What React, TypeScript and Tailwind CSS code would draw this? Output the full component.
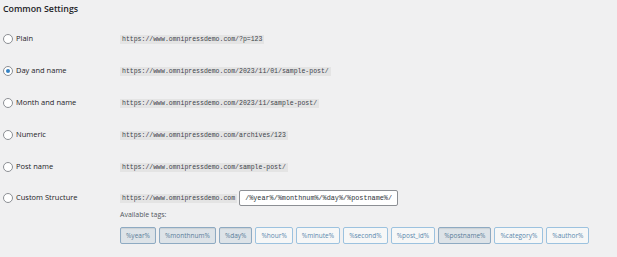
import React from "react";

const rows = [
  { label: "Plain", url: "https://www.omnipressdemo.com/?p=123" },
  { label: "Day and name", url: "https://www.omnipressdemo.com/2023/11/01/sample-post/", checked: true },
  { label: "Month and name", url: "https://www.omnipressdemo.com/2023/11/sample-post/" },
  { label: "Numeric", url: "https://www.omnipressdemo.com/archives/123" },
  { label: "Post name", url: "https://www.omnipressdemo.com/sample-post/" },
];

const tags = [
  { name: "%year%", active: true },
  { name: "%monthnum%", active: true },
  { name: "%day%", active: true },
  { name: "%hour%" },
  { name: "%minute%" },
  { name: "%second%" },
  { name: "%post_id%" },
  { name: "%postname%", active: true },
  { name: "%category%" },
  { name: "%author%" },
];

const Radio = ({ checked }: { checked?: boolean }) => (
  <span className="flex h-[10px] w-[10px] shrink-0 items-center justify-center rounded-full border border-[#8c8f94] bg-white">
    {checked && <span className="h-[4px] w-[4px] rounded-full bg-[#3582c4]" />}
  </span>
);

const Code = ({ children }: { children: React.ReactNode }) => (
  <code className="shrink-0 bg-[#e4e4e4] px-[2px] font-['Liberation_Mono',monospace] text-[6.5px] leading-[9px] text-[#3c434a]">
    {children}
  </code>
);

export default function App() {
  return (
    <div className="h-[257px] w-[617px] overflow-hidden bg-[#f0f0f1] pl-[3px] font-['Open_Sans',sans-serif] text-[#1d2327]">
      <div className="h-[23px] pt-[2px]">
        <h2 className="text-[8.8px] font-semibold leading-[14px]">Common Settings</h2>
      </div>

      {rows.map((r) => (
        <div key={r.label} className="flex h-[32px] items-center">
          <label className="flex w-[117px] shrink-0 items-center gap-[3px] text-[7.5px]">
            <Radio checked={r.checked} />
            {r.label}
          </label>
          <Code>{r.url}</Code>
        </div>
      ))}

      <div className="mt-[7px] flex">
        <label className="flex h-[16px] w-[117px] shrink-0 items-center gap-[3px] text-[7.5px]">
          <Radio />
          Custom Structure
        </label>
        <div className="flex flex-col">
          <div className="flex h-[16px] items-center gap-[2px]">
            <Code>https://www.omnipressdemo.com</Code>
            <input
              readOnly
              value="/%year%/%monthnum%/%day%/%postname%/"
              className="h-[16px] w-[159px] rounded-[2px] border border-[#8c8f94] bg-white px-[5px] font-['Liberation_Mono',monospace] text-[6.8px] text-[#2c3338] outline-none"
            />
          </div>
          <p className="mt-[3px] text-[7px] leading-[11px] text-[#50575e]">Available tags:</p>
          <div className="mt-[7px] flex gap-[3px]">
            {tags.map((t) => (
              <button
                key={t.name}
                className={
                  t.active
                    ? "h-[17px] rounded-[2px] border border-[#8eaac2] bg-[#dde3e8] px-[5px] text-[6.5px] text-[#5a7d99] shadow-[inset_0_1px_1px_rgba(0,0,0,0.08)]"
                    : "h-[17px] rounded-[2px] border border-[#9cc2df] bg-[#f6f7f7] px-[5px] text-[6.5px] text-[#5a88ad]"
                }
              >
                {t.name}
              </button>
            ))}
          </div>
        </div>
      </div>
    </div>
  );
}
